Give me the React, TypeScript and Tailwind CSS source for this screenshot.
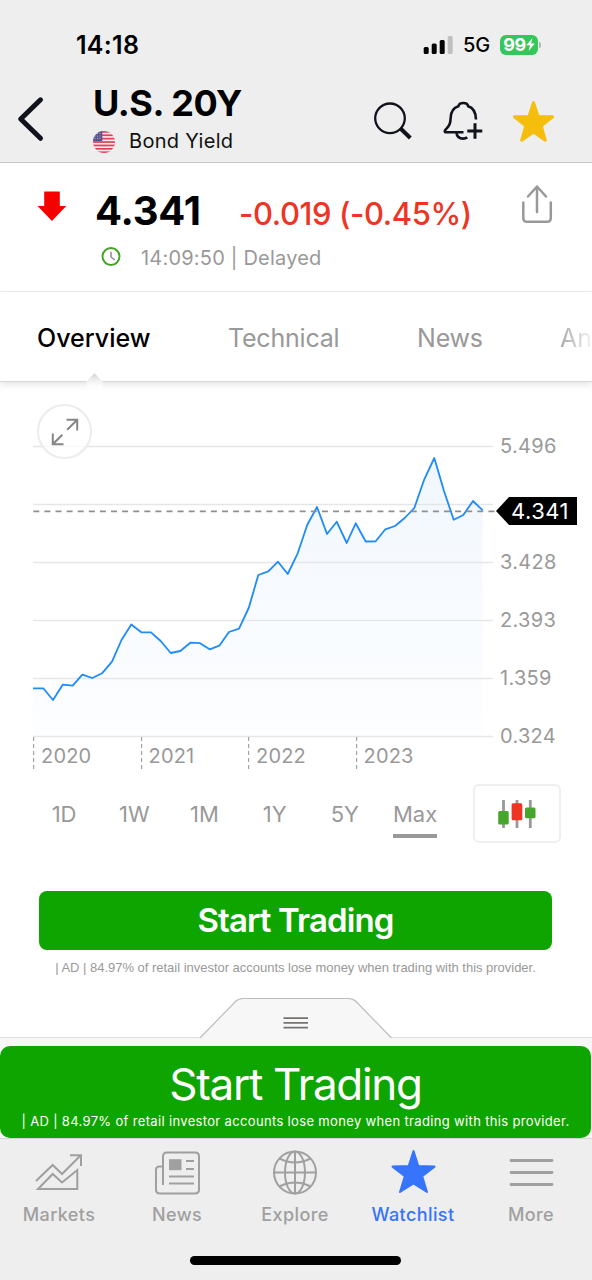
import React from "react";

const points: [number, number][] = [
  [33, 688.3], [43.3, 688.3], [53, 700], [62.7, 684.7], [72.7, 685.7], [82.3, 674.7],
  [92.3, 678], [102, 673.3], [112, 661.7], [121.5, 640], [131.3, 624.5], [141.3, 632.3],
  [151, 632.3], [160.7, 641], [170.7, 653], [180.3, 651], [190.3, 642.7], [200, 643.2],
  [209.7, 649.3], [219.3, 645.7], [229, 632], [239, 628.7], [248.7, 608], [258.3, 575],
  [268.3, 571.3], [278, 561.7], [287.7, 574], [297.7, 553.3], [307.3, 524.7], [317, 507],
  [327, 534], [336.7, 521.7], [346.7, 543], [355.7, 523.3], [365.7, 541.5], [375.7, 541.3],
  [385.3, 529.3], [395, 526], [404.7, 518], [414.3, 508], [424.3, 479.3], [434.3, 458],
  [444, 491], [453.7, 519.7], [463.3, 515], [473, 501], [482.7, 510.3],
];

const gridLines = [446.5, 504.5, 562.5, 620.5, 678.5, 736.5];
const years = ["2020", "2021", "2022", "2023"];
const ranges = ["1D", "1W", "1M", "1Y", "5Y", "Max"];

function StatusBar() {
  return (
    <div className="flex h-[84px] items-center pt-[5px] pl-[76px]">
      <span className="w-[347px] text-[25px] leading-6 font-semibold tracking-[0.3px]">14:18</span>
      <svg width="30" height="20" viewBox="0 0 30 20" className="mr-[10px] shrink-0">
        <rect x="0.7" y="12" width="5" height="7" rx="1.5" />
        <rect x="8.7" y="8.5" width="5" height="10.5" rx="1.5" />
        <rect x="16.7" y="5" width="5" height="14" rx="1.5" />
        <rect x="24.7" y="1" width="5" height="18" rx="1.5" fill="#bfbfbf" />
      </svg>
      <span className="w-[37px] text-[20px] leading-6 font-medium tracking-[-0.2px] whitespace-nowrap">5G</span>
      <div className="flex h-5 w-[38px] items-center justify-center rounded-[6px] bg-[#34c759] text-[18px] leading-5 font-bold text-white">
        <span className="tracking-[-0.5px]">99</span>
        <svg width="9" height="13" viewBox="0 0 9 13" fill="#fff">
          <path d="M6.5 0 L0.3 7.3 H4 L2.6 13 L8.8 5.5 H5.1 Z" />
        </svg>
      </div>
      <div className="ml-[1px] h-[6px] w-[2px] rounded-r-full bg-[#b5b5b5]"></div>
    </div>
  );
}

function Flag() {
  return (
    <svg width="22" height="22" viewBox="0 0 22 22">
      <defs>
        <clipPath id="flag">
          <circle cx="11" cy="11" r="11" />
        </clipPath>
      </defs>
      <g clipPath="url(#flag)">
        <rect width="22" height="22" fill="#f6e9ec" />
        {[0, 3.4, 6.8, 10.2, 13.6, 17, 20.4].map((y) => (
          <rect key={y} y={y} width="22" height="1.7" fill="#e2405c" />
        ))}
        <rect width="9.3" height="10.2" fill="#54548f" />
        {[2, 4.5, 7].map((y) =>
          [2, 4.5, 7].map((x) => <circle key={`${x}-${y}`} cx={x} cy={y + 0.5} r="0.6" fill="#c5c5dd" />)
        )}
      </g>
    </svg>
  );
}

function Header() {
  return (
    <header className="h-[163px] border-b border-[#c9c9c9] bg-[#eeeeee]">
      <StatusBar />
      <div className="flex">
        <svg width="93" height="77" viewBox="0 84 93 77" fill="none" stroke="#10131c" strokeWidth="5" strokeLinecap="round" strokeLinejoin="round">
          <path d="M40.5 99.8 L20.7 119 L40.5 138.3" />
        </svg>
        <div className="w-[280px]">
          <h1 className="h-[38px] text-[36px] leading-[38px] font-bold tracking-[-0.4px]">U.S. 20Y</h1>
          <div className="flex h-[39px] items-center">
            <Flag />
            <span className="ml-[14px] text-[20px] leading-[39px] tracking-[0.3px] text-[#111]">Bond Yield</span>
          </div>
        </div>
        <svg width="69" height="77" viewBox="373 84 69 77" fill="none" stroke="#10131c" strokeWidth="2.3">
          <circle cx="390" cy="118.3" r="14.8" />
          <path d="M400.3 128.3 L410.3 138" strokeWidth="4" />
        </svg>
        <svg width="69" height="77" viewBox="442 84 69 77" fill="none" stroke="#10131c" strokeWidth="2.6" strokeLinejoin="round">
          <path d="M463.5 132.3 H446.3 C443.8 132.3 444.7 130.2 446.5 128.6 C449.8 125.3 450.3 123.5 450.7 117.5 C451 111 453.5 107.8 458.4 106.3 C459.2 101.8 467.4 101.8 468.2 106.3 C473.2 107.8 475.8 112 476 119.5" />
          <path d="M456.5 133 C457 137 458.8 138.6 463 138.6 C464.8 138.6 466.2 138.2 467.2 137.3" />
          <path d="M467.3 131 H482.3 M475 123.3 V138.7" strokeWidth="3" />
        </svg>
        <svg width="45" height="77" viewBox="511 84 45 77" fill="#f5bd0c" stroke="#f5bd0c" strokeWidth="3" strokeLinejoin="round">
          <path d="M533.5 102.6 L538 116.5 L552.5 116.8 L541.2 125.8 L545.3 140.2 L533.5 132 L521.7 140.2 L525.8 125.8 L514.5 116.8 L529 116.5 Z" />
        </svg>
      </div>
    </header>
  );
}

function Quote() {
  return (
    <section className="flex h-[129px] border-b border-[#ececec] pl-[37px]">
      <svg width="30" height="60" viewBox="37 163 30 60" fill="#f60000">
        <path d="M44.2 191.5 H59.8 V206 H66.3 L51.9 221 L37.6 206 H44.2 Z" />
      </svg>
      <div className="w-[454px] pl-7">
        <div className="flex h-[71px] items-start pt-[28px]">
          <span className="w-[144px] text-[40px] leading-10 font-bold tracking-[-0.2px]">4.341</span>
          <span className="pt-[3px] text-[31px] leading-10 font-medium tracking-[-0.4px] whitespace-nowrap text-[#ee3524]">
            -0.019 (-0.45%)
          </span>
        </div>
        <div className="flex h-[46px] items-center pl-[6px]">
          <svg width="20" height="20" viewBox="0 0 20 20" fill="none" className="mr-5">
            <circle cx="10" cy="9.5" r="8.5" stroke="#3fa424" strokeWidth="1.9" />
            <path d="M10 4.8 V10 L13.7 12.8" stroke="#8c8c8c" strokeWidth="1.5" />
          </svg>
          <span className="pt-[2px] text-[20px] leading-[42px] tracking-[0.2px] text-[#999]">14:09:50 | Delayed</span>
        </div>
      </div>
      <svg width="32" height="62" viewBox="522 163 32 62" fill="none" stroke="#999" strokeWidth="2.5" strokeLinecap="round" strokeLinejoin="round">
        <path d="M524.3 202.5 V218 Q524.3 221.8 528 221.8 H548 Q551.8 221.8 551.8 218 V202.5 M538 212 V187 M529 196.5 L538 186.5 L547 196.5" />
      </svg>
    </section>
  );
}

function Tabs() {
  return (
    <nav className="relative flex h-[90px] overflow-visible border-b border-[#d8d8d8] pt-[26px] pl-[37px] text-[25px] leading-10 text-[#999] shadow-[0_3px_6px_rgba(0,0,0,0.10)]">
      <span className="w-[191px] font-medium text-black">Overview</span>
      <span className="w-[189px] tracking-[-0.2px]">Technical</span>
      <span className="w-[143px] tracking-[-0.2px]">News</span>
      <span className="w-8 overflow-hidden bg-gradient-to-r from-[#a8a8a8] to-[#f4f4f4] bg-clip-text text-transparent">An</span>
      {/* caret under the active tab */}
      <svg width="20" height="16" viewBox="0 0 20 16" className="absolute top-[80px] left-[84px]">
        <defs>
          <linearGradient id="caret" x1="0" y1="0" x2="0" y2="1">
            <stop offset="0" stopColor="#d4d4d4" />
            <stop offset="0.6" stopColor="#f5f5f5" />
            <stop offset="1" stopColor="#fff" />
          </linearGradient>
        </defs>
        <path d="M10.5 1 L18.5 9.5 V16 H2.5 V9.5 Z" fill="url(#caret)" />
      </svg>
    </nav>
  );
}

function PriceChart() {
  const line = points.map(([x, y]) => `${x},${y}`).join(" ");

  return (
    <section className="relative pt-[35px] pl-8">
      <div className="flex">
        <svg width="464" height="321" viewBox="32 417 464 321" fill="none">
          <defs>
            <linearGradient id="area" x1="0" y1="458" x2="0" y2="737" gradientUnits="userSpaceOnUse">
              <stop offset="0" stopColor="#f1f7fe" />
              <stop offset="1" stopColor="#fdfeff" />
            </linearGradient>
          </defs>
          <polygon points={`33,737 ${line} 482.7,737`} fill="url(#area)" />
          {gridLines.map((y) => (
            <path key={y} d={`M33 ${y} H493`} stroke="#e5e6e7" strokeWidth="1.5" />
          ))}
          <polyline points={line} stroke="#1f8bfb" strokeWidth="1.8" strokeLinejoin="round" />
          <path d="M33.3 511.3 H497" stroke="#8f8f8f" strokeWidth="1.7" strokeDasharray="6 5.1" />
        </svg>
        <div className="text-[20px] leading-[58px] tracking-[0.3px] text-[#999]">
          <div className="h-[58px] pl-1">5.496</div>
          <div className="flex h-[58px] items-center pt-[14px]">
            <svg width="14" height="28" viewBox="0 0 14 28">
              <path d="M0 14 L13 0 H14 V28 H13 Z" />
            </svg>
            <span className="h-[28px] w-[67px] bg-black pl-[1px] text-[22px] leading-[28px] tracking-[0.5px] text-white">4.341</span>
          </div>
          <div className="h-[58px] pl-1">3.428</div>
          <div className="h-[58px] pl-1">2.393</div>
          <div className="h-[58px] pl-1">1.359</div>
          <div className="-mb-[27px] h-[58px] pl-1">0.324</div>
        </div>
      </div>
      <div className="flex pl-[1px]">
        {years.map((year) => (
          <div key={year} className="flex w-[107.5px]">
            <svg width="2" height="32" className="-mt-[1px]">
              <path d="M0.5 0 V32" stroke="#a5a5a5" strokeWidth="1.4" strokeDasharray="4 3" />
            </svg>
            <span className="pl-[6px] text-[20px] leading-[36px] tracking-[0.2px] text-[#999]">{year}</span>
          </div>
        ))}
      </div>
      <button className="absolute top-[22px] left-[37px] flex size-[55px] items-center justify-center rounded-full border-2 border-[#ececec] bg-white/80">
        <svg width="28" height="28" viewBox="0 0 28 28" fill="none" stroke="#868686" strokeWidth="2">
          <path d="M15.5 1.8 H26.2 V12.5 M26 2 L16.2 11.8 M1.8 15.5 V26.2 H12.5 M2 26 L11.3 16.7" />
        </svg>
      </button>
    </section>
  );
}

function RangePicker() {
  return (
    <div className="mt-[10px] flex h-[59px] pl-[29px]">
      {ranges.map((range) => (
        <div key={range} className="flex w-[70.2px] flex-col items-center text-[22px] leading-[61px] text-[#999]">
          <span className="h-[50px]">{range}</span>
          {range === "Max" && <span className="h-[4px] w-11 bg-[#999]"></span>}
        </div>
      ))}
      <button className="ml-[23px] flex h-[59px] w-[88px] items-center justify-center rounded-[6px] border-2 border-[#efefef]">
        <svg width="38" height="28" viewBox="0 0 38 28">
          <path d="M5.5 0 V28 M19 0 V28 M32.3 0 V28" stroke="#999" strokeWidth="2.8" />
          <rect x="0.2" y="11" width="10.5" height="13.4" rx="1.5" fill="#46a52c" />
          <rect x="13.6" y="3.3" width="10.7" height="17" rx="1.5" fill="#ee3524" />
          <rect x="27" y="7.6" width="10.5" height="10.6" rx="1.5" fill="#46a52c" />
        </svg>
      </button>
    </div>
  );
}

function Ads() {
  return (
    <>
      <button className="mt-[48px] ml-[39px] h-[59px] w-[513px] rounded-[8px] bg-[#0fa500] text-[33px] leading-[57px] font-semibold tracking-[-0.9px] text-white">
        Start Trading
      </button>
      <p className="w-[591px] pt-[8px] text-center font-['Liberation_Sans',Arial,sans-serif] text-[13px] leading-5 tracking-[-0.02px] text-[#999]">
        | AD | 84.97% of retail investor accounts lose money when trading with this provider.
      </p>
      <div className="relative mt-[19px] h-[41px]">
        <svg width="592" height="41" viewBox="0 997 592 41" fill="none">
          <path d="M0 1037.5 H592" stroke="#dedede" />
          <path d="M200 1038 L235.5 1001.5 Q238.5 998.5 243 998.5 H348.5 Q353 998.5 356 1001.5 L391.5 1038" fill="#f7f7f7" stroke="#bdbdbd" strokeWidth="1.2" />
          <path d="M283.5 1018.2 H308 M283.5 1022.9 H308 M283.5 1027.6 H308" stroke="#767272" strokeWidth="1.8" />
        </svg>
      </div>
      <div className="h-[100px] bg-[#f7f7f7] pt-2">
        <div className="h-[92px] w-[591px] rounded-[10px] bg-[#0fa500] pt-[12px] text-center text-white">
          <div className="text-[44px] leading-[52px] tracking-[-1.3px]">Start Trading</div>
          <p className="text-[13px] leading-[22px] tracking-[0.34px] whitespace-nowrap">
            | AD | 84.97% of retail investor accounts lose money when trading with this provider.
          </p>
        </div>
      </div>
    </>
  );
}

function NavItem({ label, active, children }: { label: string; active?: boolean; children: React.ReactNode }) {
  return (
    <div className={`flex w-[118px] flex-col items-center ${active ? "text-[#3574fb]" : "text-[#a0a0a0]"}`}>
      <svg width="50" height="46" viewBox="0 0 50 46" fill="none" stroke="currentColor" strokeWidth="2">
        {children}
      </svg>
      <span className="pt-[8px] text-[18px] leading-[24px] font-medium tracking-[0.4px]">{label}</span>
    </div>
  );
}

function BottomNav() {
  return (
    <footer className="h-[142px] border-t border-[#d4d4d4] bg-[#eeeeee]">
      <div className="flex pt-[10px]">
        <NavItem label="Markets">
          <path d="M2 32 L18.7 16 L28 25 L46.5 6.5 M36 6.2 H47 V17 M4 40 L18.7 25 L28 33.5 L43.3 21 V40 Z" />
        </NavItem>
        <NavItem label="News">
          <path d="M11 36 V7.5 Q11 3.5 15 3.5 H43 Q47 3.5 47 7.5 V40.5 Q47 44.5 43 44.5 H8 Q4 44.5 4 40.5 V21 Q4 17.5 7.5 17.5 H11 M34 12 H42 M34 20 H42 M17 27.5 H42 M17 34.5 H42" />
          <rect x="17" y="10.2" width="12.5" height="11" fill="currentColor" stroke="none" />
        </NavItem>
        <NavItem label="Explore">
          <circle cx="25" cy="23.5" r="21" />
          <ellipse cx="25" cy="23.5" rx="10" ry="21" />
          <path d="M25 2.5 V44.5 M4 23.5 H46 M9.5 9.5 Q25 17.5 40.5 9.5 M9.5 37.5 Q25 29.5 40.5 37.5" />
        </NavItem>
        <NavItem label="Watchlist" active>
          <path
            d="M25.5 2 L30.3 17 L46.5 17.6 L34.2 27.2 L39 43 L25.5 34.3 L12 43 L16.8 27.2 L4.5 17.6 L20.7 17 Z"
            fill="currentColor"
            strokeLinejoin="round"
          />
        </NavItem>
        <NavItem label="More">
          <path d="M5 11.5 H46 M5 23.5 H46 M5 35.5 H46" strokeWidth="2.8" strokeLinecap="round" />
        </NavItem>
      </div>
      <div className="mt-[29px] ml-[190px] h-[9px] w-[211px] rounded-full bg-black"></div>
    </footer>
  );
}

export default function App() {
  return (
    <div className="h-[1280px] w-[592px] overflow-hidden bg-white font-['Inter',sans-serif] text-black">
      <Header />
      <Quote />
      <Tabs />
      <PriceChart />
      <RangePicker />
      <Ads />
      <BottomNav />
    </div>
  );
}
